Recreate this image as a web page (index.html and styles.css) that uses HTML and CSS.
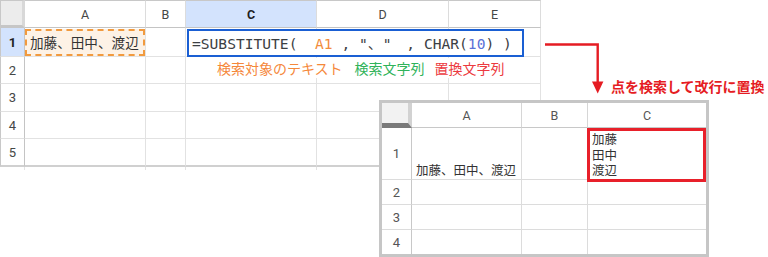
FILE: index.html
```html
<!DOCTYPE html>
<html lang="ja">
<head>
<meta charset="utf-8">
<title>SUBSTITUTE</title>
<link rel="stylesheet" href="styles.css">
</head>
<body>
<div class="page">
  <div class="sheet-top">
    <div class="corner"></div>
    <div class="hd">A</div>
    <div class="hd">B</div>
    <div class="hd sel">C</div>
    <div class="hd">D</div>
    <div class="hd">E</div>

    <div class="rh sel">1</div>
    <div class="c a1"><div class="marked">加藤、田中、渡辺</div></div>
    <div class="c"></div>
    <div class="c c1"><div class="editor"><span>=SUBSTITUTE(  </span><span class="ref">A1</span><span> , "</span><span class="jp">、</span><span>" </span><span class="comma">,</span><span> CHAR(</span><span class="num">10</span><span>) )</span></div></div>
    <div class="c"></div>
    <div class="c"></div>

    <div class="rh">2</div>
    <div class="c"></div>
    <div class="c"></div>
    <div class="c c2">
      <div class="labels">
        <span class="lb orange">検索対象のテキスト</span>
        <span class="lb green">検索文字列</span>
        <span class="lb red">置換文字列</span>
      </div>
    </div>
    <div class="c"></div>
    <div class="c"></div>

    <div class="rh">3</div>
    <div class="c"></div><div class="c"></div><div class="c"></div><div class="c"></div><div class="c"></div>

    <div class="rh">4</div>
    <div class="c"></div><div class="c"></div><div class="c"></div><div class="c"></div><div class="c"></div>

    <div class="rh last">5</div>
    <div class="c last"></div><div class="c last"></div><div class="c last"></div><div class="c last"></div><div class="c last"></div>

    <div class="tick"></div><div class="tick"></div><div class="tick"></div><div class="tick"></div><div class="tick"></div><div class="tick"></div>
  </div>

  <svg class="arrow" width="70" height="60" viewBox="0 0 70 60">
    <path d="M5 6.5 H57.7 V46" fill="none" stroke="#e51c23" stroke-width="2.4"/>
    <polygon points="52,43.5 63.4,43.5 57.7,55.5" fill="#e51c23"/>
  </svg>
  <div class="note">点を検索して改行に置換</div>

  <div class="sheet-result">
    <div class="r-corner"></div>
    <div class="r-hd">A</div>
    <div class="r-hd">B</div>
    <div class="r-hd end">C</div>

    <div class="r-rh">1</div>
    <div class="r-c bottom-text">加藤、田中、渡辺</div>
    <div class="r-c"></div>
    <div class="r-c end multi">
      <div class="ln">加藤</div>
      <div class="ln">田中</div>
      <div class="ln">渡辺</div>
      <div class="hl"></div>
    </div>

    <div class="r-rh">2</div>
    <div class="r-c"></div><div class="r-c"></div><div class="r-c end"></div>

    <div class="r-rh">3</div>
    <div class="r-c"></div><div class="r-c"></div><div class="r-c end"></div>

    <div class="r-rh bot">4</div>
    <div class="r-c bot"></div><div class="r-c bot"></div><div class="r-c end bot"></div>
  </div>
</div>
</body>
</html>
```

FILE: styles.css
```css
* { box-sizing: border-box; }

body {
  margin: 0;
  background: #ffffff;
  font-family: "Noto Sans CJK JP", "Noto Sans", sans-serif;
  color: #333333;
}

.page {
  position: relative;
  width: 768px;
  height: 257px;
  overflow: hidden;
}

/* ---------- top sheet ---------- */
.sheet-top {
  display: grid;
  grid-template-columns: 25px 121px 40px 131px 132px 92px;
  grid-template-rows: 28px 29px 27px 28px 27px 28px 3px;
  width: max-content;
}

.corner {
  background: #ececec;
  border-top: 1px solid #c8c8c8;
  border-left: 1px solid #c8c8c8;
  border-right: 3px solid #d8d8d8;
  border-bottom: 3px solid #c6c6c6;
}

.hd {
  display: flex;
  align-items: center;
  justify-content: center;
  font-family: Roboto, "Liberation Sans", sans-serif;
  font-size: 12.5px;
  color: #444746;
  background: #ffffff;
  border-top: 1px solid #c8c8c8;
  border-right: 1px solid #dcdcdc;
  border-bottom: 1px solid #c4c4c4;
}

.rh {
  display: flex;
  align-items: center;
  justify-content: center;
  font-family: Roboto, "Liberation Sans", sans-serif;
  font-size: 13px;
  color: #444746;
  background: #ffffff;
  border-left: 1px solid #c8c8c8;
  border-right: 1px solid #c4c4c4;
  border-bottom: 1px solid #e1e1e1;
}

.sel {
  background: #d3e3fd;
  color: #1f1f1f;
  font-weight: 700;
}

.c {
  border-right: 1px solid #e2e2e2;
  border-bottom: 1px solid #e2e2e2;
}

.rh.last, .c.last {
  border-bottom: 2px solid #d0d0d0;
}

.tick {
  border-right: 1px solid #e2e2e2;
}
.tick:first-child { border-right-color: #c8c8c8; }

.a1 {
  padding: 1px 0 0 0;
}
.marked {
  height: 27px;
  border: 2px dashed #f19a3e;
  background: #fdf2e6;
  font-size: 13.6px;
  line-height: 23px;
  padding-left: 3px;
  color: #333333;
  white-space: nowrap;
}

.c1 { position: relative; }
.editor {
  position: absolute;
  left: 1px;
  top: 1px;
  width: 337px;
  height: 28px;
  border: 2px solid #1a5fd3;
  background: #ffffff;
  z-index: 2;
  padding-left: 3px;
  font-family: "DejaVu Sans Mono", "Noto Sans CJK JP", monospace;
  font-size: 14.6px;
  line-height: 24px;
  white-space: pre;
  color: #3c4043;
}
.ref { color: #f28b3c; }
.num { color: #5b72d6; }
.jp {
  display: inline-block;
  width: 15px;
  font-family: "Noto Sans CJK JP", sans-serif;
}
.comma {
  display: inline-block;
  margin-left: 6px;
}

.c2 { position: relative; }
.labels {
  position: relative;
  z-index: 1;
  display: flex;
  white-space: nowrap;
  padding-left: 31px;
  padding-top: 1px;
  font-size: 14px;
  line-height: 20px;
}
.lb { background: #ffffff; }
.lb.orange { color: #f5883b; }
.lb.green { color: #2fb35a; margin-left: 12px; }
.lb.red { color: #ec3a40; margin-left: 10px; }

/* ---------- annotation ---------- */
.arrow {
  position: absolute;
  left: 540px;
  top: 38px;
}
.note {
  position: absolute;
  left: 611px;
  top: 76px;
  font-size: 14px;
  line-height: 20px;
  font-weight: 700;
  color: #e51c23;
  white-space: nowrap;
}

/* ---------- result sheet ---------- */
.sheet-result {
  position: absolute;
  left: 379px;
  top: 100px;
  display: grid;
  grid-template-columns: 30px 110px 66px 118px;
  grid-template-rows: 25px 52px 25px 25px 24px;
  border: 3px solid #c6c6c6;
  background: #ffffff;
  width: 330px;
  height: 157px;
}

.r-corner {
  background: #f2f2f2;
  border-right: 4px solid #d2d2d2;
  border-bottom: 5px solid #7a7a7a;
}

.r-hd {
  display: flex;
  align-items: center;
  justify-content: center;
  font-family: Roboto, "Liberation Sans", sans-serif;
  font-size: 12.5px;
  color: #555555;
  border-right: 1px solid #d6d6d6;
  border-bottom: 1px solid #c8c8c8;
}

.r-rh {
  display: flex;
  align-items: center;
  justify-content: center;
  font-family: Roboto, "Liberation Sans", sans-serif;
  font-size: 13px;
  color: #555555;
  border-right: 1px solid #c8c8c8;
  border-bottom: 1px solid #dcdcdc;
}

.r-c {
  border-right: 1px solid #dcdcdc;
  border-bottom: 1px solid #dcdcdc;
  font-size: 12.5px;
  color: #333333;
}

.end { border-right: none; }
.bot { border-bottom: none; }

.bottom-text {
  display: flex;
  align-items: flex-end;
  padding: 0 0 1px 4px;
  line-height: 16px;
  white-space: nowrap;
}

.multi {
  position: relative;
  padding: 3px 0 0 4px;
}

.ln {
  height: 15.5px;
  line-height: 15.5px;
  white-space: nowrap;
}

.hl {
  position: absolute;
  left: -1px;
  top: 0;
  width: 119px;
  height: 54px;
  border: 3px solid #e8202a;
}
```
